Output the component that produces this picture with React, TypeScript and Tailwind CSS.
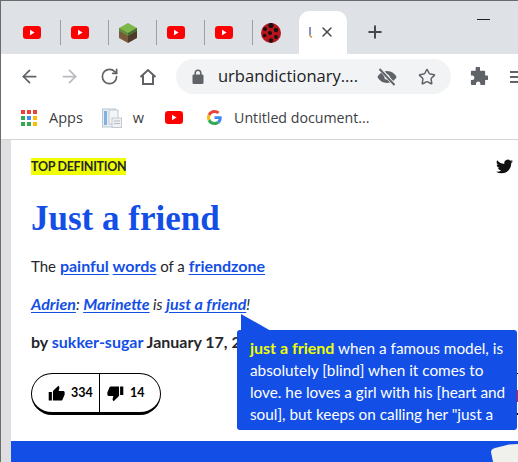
import React from 'react';
import { ArrowLeft, ArrowRight, RotateCw, Star, X, Plus } from 'lucide-react';

const UI_FONT = 'font-["Open_Sans","Noto_Sans",sans-serif]';
const PAGE_FONT = 'font-["Lato","Noto_Sans",sans-serif]';

const YouTube = ({ className = '' }: { className?: string }) => (
  <svg viewBox="0 0 18 13" width="18" height="13" className={className}>
    <rect width="18" height="13" rx="3.2" fill="#ff0000" />
    <path d="M7 3.7 11.6 6.5 7 9.3z" fill="#fff" />
  </svg>
);

const Grass = () => (
  <svg viewBox="0 0 18 20" width="18" height="20">
    <path d="M9 0 18 5 9 10 0 5z" fill="#7cb84a" />
    <path d="M0 5 9 10V20L0 15z" fill="#7a5a3a" />
    <path d="M18 5 9 10V20L18 15z" fill="#4e3a28" />
    <path d="M0 5 9 10V13L0 8z" fill="#5f8f3a" />
    <path d="M18 5 9 10V13L18 8z" fill="#44702e" />
  </svg>
);

const Ladybug = () => (
  <svg viewBox="0 0 20 20" width="20" height="20">
    <circle cx="10" cy="10" r="10" fill="#b8141c" />
    <g fill="#1a1010">
      <circle cx="10" cy="2.500" r="2.600" />
      <circle cx="4" cy="6" r="2" />
      <circle cx="15" cy="7" r="2.200" />
      <circle cx="9" cy="10" r="2" />
      <circle cx="3.500" cy="12.500" r="1.800" />
      <circle cx="15" cy="14" r="2" />
      <circle cx="10" cy="17.500" r="2.200" />
    </g>
  </svg>
);

const Tab = ({ children, last = false }: { children: React.ReactNode; last?: boolean }) => (
  <div className={`relative flex h-[25px] shrink-0 items-center ${last ? 'w-[46px] pl-[8px]' : 'w-[48px] pl-[10px]'}`}>
    {children}
    {!last && <span className="absolute right-0 top-0 h-[25px] w-[1px] bg-[#9aa0a6]" />}
  </div>
);

const TabStrip = () => (
  <div className="relative flex h-[53px] bg-[#dee1e6] pl-[12px]">
    <div className="mt-[19px] flex">
      <Tab><YouTube /></Tab>
      <Tab><YouTube /></Tab>
      <Tab><Grass /></Tab>
      <Tab><YouTube /></Tab>
      <Tab><YouTube /></Tab>
      <Tab last><Ladybug /></Tab>
    </div>
    <div className="mt-[10px] flex h-[43px] w-[48px] items-center rounded-t-[10px] bg-white pl-[10px] pb-[1px]">
      <svg viewBox="0 0 3 11" width="3" height="11">
        <path d="M1 0v8" stroke="#4a55a8" strokeWidth="1.300" fill="none" />
        <path d="M1 8q0 2 2 2" stroke="#d98a3a" strokeWidth="1.300" fill="none" />
      </svg>
      <X size={16} strokeWidth={2.2} className="ml-[7px] text-[#45494e]" />
    </div>
    <Plus size={20} strokeWidth={2.4} className="ml-[18px] mt-[21px] text-[#45494e]" />
    <span className="absolute left-[476px] top-[18px] h-[1px] w-[13px] bg-[#222]" />
  </div>
);

const Home = () => (
  <svg viewBox="0 0 18 18" width="18" height="18" fill="none" stroke="#5f6368" strokeWidth="2">
    <path d="M1.500 9 9 2l7.500 7M4 7.500V16h10V7.500" />
  </svg>
);

const LockIcon = () => (
  <svg viewBox="0 0 12 15" width="12" height="15" fill="#5f6368">
    <path d="M3.200 6V4a2.800 2.800 0 0 1 5.600 0v2" fill="none" stroke="#5f6368" strokeWidth="1.500" />
    <rect x="0.500" y="5.500" width="11" height="9.500" rx="1.300" />
  </svg>
);

const EyeCrossed = () => (
  <svg viewBox="0 0 20 18" width="20" height="18" className="ml-[21px] shrink-0">
    <path d="M10 3C5.500 3 2 5.800 0.500 9c1.500 3.200 5 6 9.500 6s8-2.800 9.500-6C18 5.800 14.500 3 10 3z" fill="#5f6368" />
    <circle cx="10" cy="9" r="2.600" fill="#f1f3f4" />
    <path d="M3 0.800 17.500 17" stroke="#f1f3f4" strokeWidth="3.600" />
    <path d="M2.500 1 17.500 17" stroke="#5f6368" strokeWidth="1.900" />
  </svg>
);

const Puzzle = () => (
  <svg viewBox="0 0 20 20" width="19" height="19" fill="#5f6368">
    <path d="M7 1.500a2.300 2.300 0 0 1 4.600 0V4H16a1 1 0 0 1 1 1v4h1.600a2.400 2.400 0 0 1 0 4.800H17V18a1 1 0 0 1-1 1h-4v-1.500a2.300 2.300 0 0 0-4.600 0V19H3a1 1 0 0 1-1-1v-4.200h1.300a2.400 2.400 0 0 0 0-4.800H2V5a1 1 0 0 1 1-1h4z" />
  </svg>
);

const Toolbar = () => (
  <div className="flex h-[45px] items-center overflow-hidden bg-white pl-[18px]">
    <ArrowLeft size={21} strokeWidth={2} className="shrink-0 text-[#5f6368]" />
    <ArrowRight size={21} strokeWidth={2} className="ml-[19px] shrink-0 text-[#b8babd]" />
    <RotateCw size={19} strokeWidth={2.100} className="ml-[20px] shrink-0 text-[#5f6368]" />
    <div className="ml-[20px] shrink-0"><Home /></div>
    <div className="ml-[19px] flex h-[35px] w-[275px] shrink-0 items-center rounded-full bg-[#f1f3f4] pl-[16px]">
      <LockIcon />
      <span className={`ml-[14px] w-[138px] shrink-0 whitespace-nowrap text-[16.5px] leading-none text-[#202124] ${UI_FONT}`}>urbandictionary....</span>
      <EyeCrossed />
      <Star size={18} strokeWidth={2} className="ml-[21px] shrink-0 text-[#5f6368]" />
    </div>
    <div className="ml-[18px] shrink-0"><Puzzle /></div>
    <div className="ml-[22px] flex shrink-0 flex-col gap-[3px]">
      <span className="h-[2px] w-[14px] bg-[#5f6368]" />
      <span className="h-[2px] w-[14px] bg-[#5f6368]" />
      <span className="h-[2px] w-[14px] bg-[#5f6368]" />
    </div>
  </div>
);

const AppsGrid = () => {
  const colours = ['#ea4335', '#ea4335', '#ea4335', '#34a853', '#4285f4', '#fbbc04', '#34a853', '#34a853', '#fbbc04'];
  return (
    <div className="grid w-[16px] grid-cols-3 gap-[2px]">
      {colours.map((c, i) => (
        <span key={i} className="h-[4px] w-[4px]" style={{ backgroundColor: c }} />
      ))}
    </div>
  );
};

const DocIcon = () => (
  <svg viewBox="0 0 20 20" width="20" height="20">
    <rect x="0.500" y="1" width="13" height="18" fill="#e8eef5" stroke="#b9c6d4" />
    <rect x="2" y="3" width="3" height="14" fill="#7fb2e0" />
    <rect x="7" y="2" width="9" height="14" fill="#f2f4f6" stroke="#c3c9d0" />
    <rect x="10" y="10" width="9.500" height="9.500" fill="#eef0f2" stroke="#c3c9d0" />
    <path d="M12 13h6M12 15.500h6" stroke="#b5bcc4" />
  </svg>
);

const GoogleG = () => (
  <svg viewBox="0 0 48 48" width="15" height="15">
    <path fill="#ea4335" d="M24 9.500c3.500 0 6.700 1.200 9.200 3.600l6.900-6.900C35.900 2.400 30.500 0 24 0 14.600 0 6.500 5.400 2.600 13.200l8 6.200C12.500 13.600 17.800 9.500 24 9.500z" />
    <path fill="#4285f4" d="M47 24.500c0-1.600-.1-3.100-.4-4.500H24v9h13c-.6 3-2.300 5.500-4.800 7.200l7.700 6C44.400 38 47 31.800 47 24.500z" />
    <path fill="#fbbc05" d="M10.600 28.600c-.5-1.400-.8-3-.8-4.600s.3-3.200.8-4.600l-8-6.200C.9 16.500 0 20.100 0 24s.9 7.500 2.600 10.800z" />
    <path fill="#34a853" d="M24 48c6.500 0 11.900-2.100 15.900-5.800l-7.700-6c-2.200 1.500-4.900 2.300-8.200 2.300-6.200 0-11.500-4.100-13.400-9.900l-8 6.200C6.500 42.600 14.600 48 24 48z" />
  </svg>
);

const Bookmarks = () => (
  <div className={`flex h-[41px] items-center border-b border-[#d3d4d6] bg-white pb-[3px] pl-[20px] text-[14.5px] text-[#3c4043] ${UI_FONT}`}>
    <AppsGrid />
    <span className="ml-[12px]">Apps</span>
    <div className="ml-[19px]"><DocIcon /></div>
    <span className="ml-[11px]">w</span>
    <YouTube className="ml-[21px]" />
    <div className="ml-[24px]"><GoogleG /></div>
    <span className="ml-[12px] whitespace-nowrap text-[14.2px]">Untitled document...</span>
  </div>
);

const Twitter = () => (
  <svg viewBox="0 0 24 24" width="17" height="17" fill="#111">
    <path d="M24 4.600a9.800 9.800 0 0 1-2.800.8 4.900 4.900 0 0 0 2.100-2.700 9.800 9.800 0 0 1-3.100 1.200 4.900 4.900 0 0 0-8.400 4.500A13.900 13.900 0 0 1 1.700 3.200a4.900 4.900 0 0 0 1.500 6.500 4.900 4.900 0 0 1-2.200-.6v.1a4.900 4.900 0 0 0 3.900 4.800 4.900 4.900 0 0 1-2.200.1 4.900 4.900 0 0 0 4.600 3.400A9.900 9.900 0 0 1 0 19.500 13.900 13.900 0 0 0 7.500 21.700c9.100 0 14-7.500 14-14v-.6A10 10 0 0 0 24 4.600z" />
  </svg>
);

const THUMB = 'M1 10h4.500v12H1zM7 22h11.500c.9 0 1.600-.5 1.900-1.300l3-7.100c.1-.3.100-.5.100-.7v-2.400c0-1.100-.9-2-2-2h-6.400l1-4.600V3.500c0-.4-.2-.8-.4-1.100L14.600 1 7.700 7.800C7.300 8.200 7 8.700 7 9.200z';

const ThumbUp = () => (
  <svg viewBox="0 0 24 24" width="17" height="17" fill="#000">
    <path d={THUMB} />
  </svg>
);

const ThumbDown = () => (
  <svg viewBox="0 0 24 24" width="17" height="17" fill="#000" className="rotate-180">
    <path d={THUMB} />
  </svg>
);

const A = ({ children }: { children: React.ReactNode }) => (
  <a href="#" className="text-[16px] font-bold text-[#134fe6] underline underline-offset-2">{children}</a>
);

const Page = () => (
  <div className="relative flex-1 overflow-hidden bg-white">
    <div className={`flex h-[301px] flex-col pl-[20px] pt-[18px] text-[15px] text-[#26262b] ${PAGE_FONT}`}>
      <div className="flex items-start justify-between pr-[5px]">
        <span className="bg-[#effe00] text-[12.5px] leading-[17px] font-bold tracking-[-0.3px] text-[#26262b]">TOP DEFINITION</span>
        <Twitter />
      </div>
      <h1 className="mt-[22px] font-['Liberation_Serif',serif] text-[35px] leading-[44px] font-bold text-[#134fe6]">Just a friend</h1>
      <p className="mt-[13px] leading-[24px]">
        The <A>painful</A> <A>words</A> of a <A>friendzone</A>
      </p>
      <p className="mt-[14px] leading-[24px] italic">
        <A>Adrien</A>: <A>Marinette</A> is <A>just a friend</A>!
      </p>
      <p className="mt-[14px] text-[16px] leading-[24px] font-bold whitespace-nowrap">
        by <span className="text-[#134fe6]">sukker-sugar</span> January 17, 2
      </p>
      <div className="mt-[19px] flex h-[42px] w-[130px] items-stretch rounded-full border border-b-[3px] border-black text-[12.5px] font-bold text-black">
        <div className="flex w-[68px] items-center gap-[6px] border-r border-black pl-[16px]">
          <ThumbUp /><span>334</span>
        </div>
        <div className="flex items-center gap-[6px] pl-[7px]">
          <ThumbDown /><span>14</span>
        </div>
      </div>
    </div>
    <div className="relative h-[21px] bg-[#134fe6]">
      <svg viewBox="0 0 27 18" width="27" height="18" className="absolute right-0 top-[3px]">
        <path d="M0 8Q0 5 4 4L18 0.500 27 0V18H2z" fill="#f0f0ec" />
      </svg>
    </div>
    {/* tooltip sits over the definition */}
    <div className={`absolute left-[226px] top-[190px] h-[100px] w-[280px] overflow-hidden rounded-[3px] bg-[#134fe6] pl-[13px] pt-[7px] text-[15.3px] leading-[22px] text-white ${PAGE_FONT}`}>
      <span className="text-[16px] font-bold text-[#effe00]">just a friend</span> when a famous model, is absolutely [blind] when it comes to love. he loves a girl with his [heart and soul], but keeps on calling her "just a
    </div>
    <svg viewBox="0 0 30 17" width="30" height="17" className="absolute left-[230px] top-[174px]">
      <path d="M0 0 30 17H0z" fill="#134fe6" />
    </svg>
    {/* bits of the page poking out past the tooltip */}
    <span className="absolute right-0 top-[233px] h-[1px] w-[1px] bg-black" />
    <span className="absolute right-0 top-[250px] h-[12px] w-[1px] bg-[#e0203a]" />
    <span className="absolute right-0 top-[273px] h-[2px] w-[1px] bg-black" />
  </div>
);

const App: React.FC = () => {
  return (
    <div className="flex h-[462px] w-[518px] flex-col overflow-hidden border-t border-l border-[#6b6b6b] bg-white">
      <TabStrip />
      <Toolbar />
      <Bookmarks />
      <div className="flex flex-1 overflow-hidden">
        <div className="w-[10px] shrink-0 bg-[#dfdfe1]" />
        <Page />
      </div>
    </div>
  );
};

export default App;
